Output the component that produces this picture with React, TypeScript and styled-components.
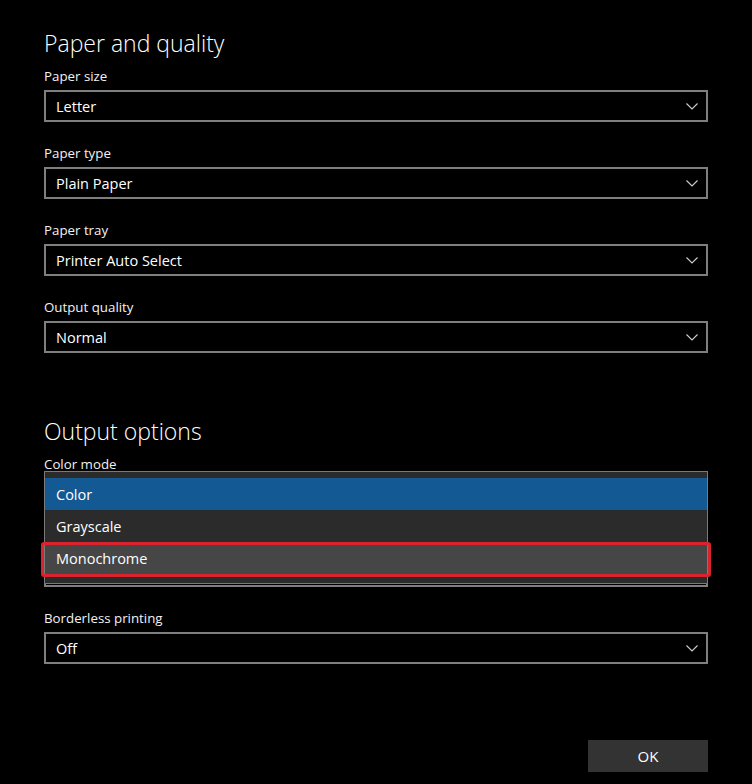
import React from "react";
import styled, { createGlobalStyle } from "styled-components";

const Global = createGlobalStyle`
  html, body { margin: 0; padding: 0; background: #000; }
  body { font-family: "Open Sans", "Noto Sans", sans-serif; color: #fff; }
  * { box-sizing: border-box; }
`;

const Page = styled.div`
  width: 752px;
  height: 784px;
  background: #000;
  padding: 27px 44px 0 44px;
  display: flex;
  flex-direction: column;
`;

const Section = styled.section<{ $gapAfter: number }>`
  display: flex;
  flex-direction: column;
  gap: 21px;
  margin-bottom: ${(p) => p.$gapAfter}px;
`;

const SectionTitle = styled.h2`
  margin: 0 0 -14px 0;
  height: 32px;
  font-size: 23px;
  line-height: 32px;
  font-weight: 300;
  color: #fff;
`;

const Field = styled.div`
  position: relative;
  display: flex;
  flex-direction: column;
  gap: 4px;
`;

const Label = styled.div<{ $covered?: boolean }>`
  height: 20px;
  font-size: 13.3px;
  line-height: 20px;
  color: #f2f2f2;
  visibility: ${(p) => (p.$covered ? "hidden" : "visible")};
`;

const Select = styled.div<{ $covered?: boolean }>`
  height: 32px;
  border: 2px solid #7f7f7f;
  display: flex;
  align-items: center;
  justify-content: space-between;
  padding: 0 8px 0 10px;
  font-size: 14.5px;
  color: #fff;
  & > * {
    visibility: ${(p) => (p.$covered ? "hidden" : "visible")};
  }
`;

const Popup = styled.div`
  position: absolute;
  left: 0;
  right: 0;
  top: 17px;
  background: #2b2b2b;
  border: 1px solid #7a7a7a;
  padding: 6px 0 9px 0;
  z-index: 2;
`;

const Option = styled.div<{ $variant?: "selected" | "hover" | "normal" }>`
  position: relative;
  height: 32px;
  display: flex;
  align-items: center;
  padding-left: 11px;
  font-size: 14.5px;
  color: #fff;
  background: ${(p) =>
    p.$variant === "selected" ? "#135a94" : p.$variant === "hover" ? "#464646" : "#2b2b2b"};
`;

const Highlight = styled.div`
  position: absolute;
  left: -4px;
  right: -4px;
  top: 0;
  bottom: -3px;
  border: 3px solid #d9232e;
  border-radius: 3px;
  pointer-events: none;
`;

const Footer = styled.div`
  display: flex;
  justify-content: flex-end;
  margin-top: 76px;
`;

const Button = styled.button`
  width: 120px;
  height: 32px;
  border: none;
  background: #333333;
  color: #fff;
  font-family: inherit;
  font-size: 15px;
`;

const Chevron = () => (
  <svg width="12" height="7" viewBox="0 0 12 7" fill="none">
    <path d="M0.5 0.5 L6 6 L11.5 0.5" stroke="#d0d0d0" strokeWidth="1.1" />
  </svg>
);

const Dropdown = ({
  label,
  value,
  covered,
}: {
  label: string;
  value: string;
  covered?: boolean;
}) => (
  <Field>
    <Label $covered={covered}>{label}</Label>
    <Select $covered={covered}>
      <span>{value}</span>
      <Chevron />
    </Select>
  </Field>
);

export default function App() {
  return (
    <>
      <Global />
      <Page>
        <Section $gapAfter={62}>
          <SectionTitle>Paper and quality</SectionTitle>
          <Dropdown label="Paper size" value="Letter" />
          <Dropdown label="Paper type" value="Plain Paper" />
          <Dropdown label="Paper tray" value="Printer Auto Select" />
          <Dropdown label="Output quality" value="Normal" />
        </Section>
        <Section $gapAfter={0}>
          <SectionTitle>Output options</SectionTitle>
          <Field>
            <Label>Color mode</Label>
            <Select $covered>
              <span>Color</span>
              <Chevron />
            </Select>
            <Popup>
              <Option $variant="selected">Color</Option>
              <Option>Grayscale</Option>
              <Option $variant="hover">
                Monochrome
                <Highlight />
              </Option>
            </Popup>
          </Field>
          <Dropdown label="Double-sided printing" value="Off" covered />
          <Dropdown label="Borderless printing" value="Off" />
        </Section>
        <Footer>
          <Button>OK</Button>
        </Footer>
      </Page>
    </>
  );
}
